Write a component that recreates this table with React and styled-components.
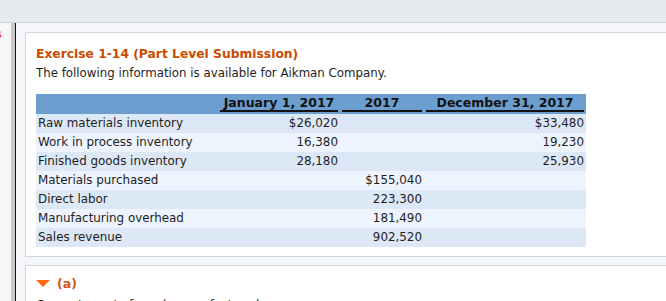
import React from 'react';
import styled, { createGlobalStyle } from 'styled-components';

const GlobalStyle = createGlobalStyle`
    body {
        margin: 0;
        background: #f4f6f9;
        font-family: "DejaVu Sans", Verdana, sans-serif;
        color: #1e1e1e;
        overflow: hidden;
    }
`;

const rows = [
    { label: 'Raw materials inventory', jan: '$26,020', year: '', dec: '$33,480' },
    { label: 'Work in process inventory', jan: '16,380', year: '', dec: '19,230' },
    { label: 'Finished goods inventory', jan: '28,180', year: '', dec: '25,930' },
    { label: 'Materials purchased', jan: '', year: '$155,040', dec: '' },
    { label: 'Direct labor', jan: '', year: '223,300', dec: '' },
    { label: 'Manufacturing overhead', jan: '', year: '181,490', dec: '' },
    { label: 'Sales revenue', jan: '', year: '902,520', dec: '' },
];

const App = () => {
    return (
        <>
            <GlobalStyle />
            <TopBar />
            <Body>
                <Side>
                    <SideMark>s</SideMark>
                </Side>
                <Divider />
                <Main>
                    <Panel>
                        <Title>Exercise 1-14 (Part Level Submission)</Title>
                        <Intro>The following information is available for Aikman Company.</Intro>
                        <Table>
                            <HeadCell />
                            <HeadCell>
                                <HeadLabel>January 1, 2017</HeadLabel>
                            </HeadCell>
                            <HeadCell>
                                <HeadLabel>2017</HeadLabel>
                            </HeadCell>
                            <HeadCell>
                                <HeadLabel>December 31, 2017</HeadLabel>
                            </HeadCell>
                            {rows.map((r, i) => (
                                <React.Fragment key={r.label}>
                                    <Cell odd={i % 2 === 1}>{r.label}</Cell>
                                    <Cell odd={i % 2 === 1} num>{r.jan}</Cell>
                                    <Cell odd={i % 2 === 1} num>{r.year}</Cell>
                                    <Cell odd={i % 2 === 1} num>{r.dec}</Cell>
                                </React.Fragment>
                            ))}
                        </Table>
                    </Panel>
                    <Panel part>
                        <PartHead>
                            <Caret />
                            <PartLabel>(a)</PartLabel>
                        </PartHead>
                        <Question>Compute cost of goods manufactured.</Question>
                    </Panel>
                </Main>
            </Body>
        </>
    );
};

export default App;

const TopBar = styled.div`
    height: 22px;
    background: #e6e9ed;
    border-bottom: 1px solid #cdd3da;
`;

const Body = styled.div`
    display: flex;
    height: 278px;
`;

const Side = styled.div`
    width: 11px;
    background: #f7f7f7;
    overflow: hidden;
    position: relative;
`;

const SideMark = styled.span`
    position: absolute;
    left: -6px;
    top: 3px;
    font-size: 13px;
    font-weight: bold;
    color: #e8304a;
`;

const Divider = styled.div`
    width: 4px;
    background: #c9c9c9;
    border-right: 1px solid #111;
`;

const Main = styled.div`
    flex: 1;
    padding: 9px 0 0 9px;
    display: flex;
    flex-direction: column;
    gap: 8px;
    overflow: hidden;
`;

const Panel = styled.div`
    background: #fff;
    border: 1px solid #cfd6df;
    border-right: none;
    margin-right: -20px;
    padding: ${(p) => (p.part ? '9px 10px 0' : '13px 10px 9px')};
    flex-shrink: 0;
`;

const Title = styled.div`
    color: #cc4a00;
    font-weight: bold;
    font-size: 12.3px;
    line-height: 16px;
`;

const Intro = styled.div`
    font-size: 11.8px;
    line-height: 16px;
    margin-top: 3px;
    white-space: nowrap;
`;

const Question = styled(Intro)`
    margin-top: 6px;
`;

const Table = styled.div`
    display: grid;
    grid-template-columns: 182px 122px 84px 162px;
    width: 550px;
    margin-top: 13px;
    font-size: 11.9px;
`;

const HeadCell = styled.div`
    background: #6c9fcf;
    height: 20px;
    padding: 0 2px;
    display: flex;
    align-items: flex-end;
`;

const HeadLabel = styled.div`
    flex: 1;
    text-align: center;
    font-weight: bold;
    font-size: 12.5px;
    color: #111;
    line-height: 14px;
    border-bottom: 2px solid #111;
    margin-bottom: 2px;
`;

const Cell = styled.div`
    background: ${(p) => (p.odd ? '#edf4fd' : '#dde8f7')};
    height: 19px;
    line-height: 19px;
    padding: 0 2px;
    text-align: ${(p) => (p.num ? 'right' : 'left')};
    white-space: nowrap;
`;

const PartHead = styled.div`
    display: flex;
    align-items: center;
    gap: 7px;
    height: 16px;
`;

const Caret = styled.span`
    width: 0;
    height: 0;
    border-left: 7px solid transparent;
    border-right: 7px solid transparent;
    border-top: 7px solid #ff6a13;
`;

const PartLabel = styled.span`
    color: #d4561c;
    font-weight: bold;
    font-size: 12.5px;
`;
